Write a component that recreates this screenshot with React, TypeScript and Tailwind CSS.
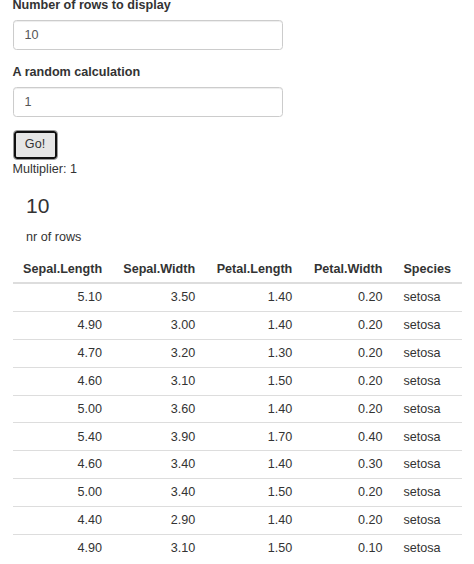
import React from "react";

const rows = [
  ["5.10", "3.50", "1.40", "0.20", "setosa"],
  ["4.90", "3.00", "1.40", "0.20", "setosa"],
  ["4.70", "3.20", "1.30", "0.20", "setosa"],
  ["4.60", "3.10", "1.50", "0.20", "setosa"],
  ["5.00", "3.60", "1.40", "0.20", "setosa"],
  ["5.40", "3.90", "1.70", "0.40", "setosa"],
  ["4.60", "3.40", "1.40", "0.30", "setosa"],
  ["5.00", "3.40", "1.50", "0.20", "setosa"],
  ["4.40", "2.90", "1.40", "0.20", "setosa"],
  ["4.90", "3.10", "1.50", "0.10", "setosa"],
];

const headers = ["Sepal.Length", "Sepal.Width", "Petal.Length", "Petal.Width", "Species"];
const widths = ["w-[100px]", "w-[93px]", "w-[97px]", "w-[90px]", "w-[69px]"];

const App = () => {
  return (
    <div className="min-h-screen bg-white pl-[12.5px] pr-[12px] text-[12.6px] leading-[17.6px] text-[#333] font-['Liberation_Sans',Arial,sans-serif] overflow-hidden">
      <label className="mt-[-3px] mb-[5px] block font-bold">Number of rows to display</label>
      <input
        className="block h-[30px] w-[270px] rounded-[3.5px] border border-[#ccc] px-[11px] text-[#555] shadow-[inset_0_1px_1px_rgba(0,0,0,0.075)] outline-none"
        defaultValue="10"
      />
      <label className="mt-[14.5px] mb-[5px] block font-bold">A random calculation</label>
      <input
        className="block h-[30px] w-[270px] rounded-[3.5px] border border-[#ccc] px-[11px] text-[#555] shadow-[inset_0_1px_1px_rgba(0,0,0,0.075)] outline-none"
        defaultValue="1"
      />
      <button className="mt-[13px] flex h-[30px] w-[45px] items-center justify-center rounded-[4px] border border-[#999] bg-[#e6e6e6] text-[#333] shadow-[inset_0_0_0_2px_#111]">
        Go!
      </button>
      <div className="mt-[1px]">Multiplier: 1</div>

      <div className="mt-[16px] ml-[13.5px] text-[21px] leading-[23px]">10</div>
      <div className="mt-[11.5px] ml-[13.5px]">nr of rows</div>

      <table className="mt-[9px] w-[449.5px] table-fixed border-separate border-spacing-0">
        <thead>
          <tr>
            {headers.map((h, i) => (
              <th
                key={h}
                className={`${widths[i]} h-[28.5px] border-b-2 border-[#ddd] px-[10.5px] pb-[3px] align-bottom font-bold ${
                  i === 4 ? "text-left" : "text-right"
                }`}
              >
                {h}
              </th>
            ))}
          </tr>
        </thead>
        <tbody>
          {rows.map((r, ri) => (
            <tr key={ri}>
              {r.map((c, ci) => (
                <td
                  key={ci}
                  className={`px-[10.5px] pt-[1px] align-middle ${ri === 0 ? "h-[27px]" : "h-[27.9px] border-t border-[#ddd]"} ${
                    ci === 4 ? "text-left" : "text-right"
                  }`}
                >
                  {c}
                </td>
              ))}
            </tr>
          ))}
        </tbody>
      </table>
    </div>
  );
};

export default App;
